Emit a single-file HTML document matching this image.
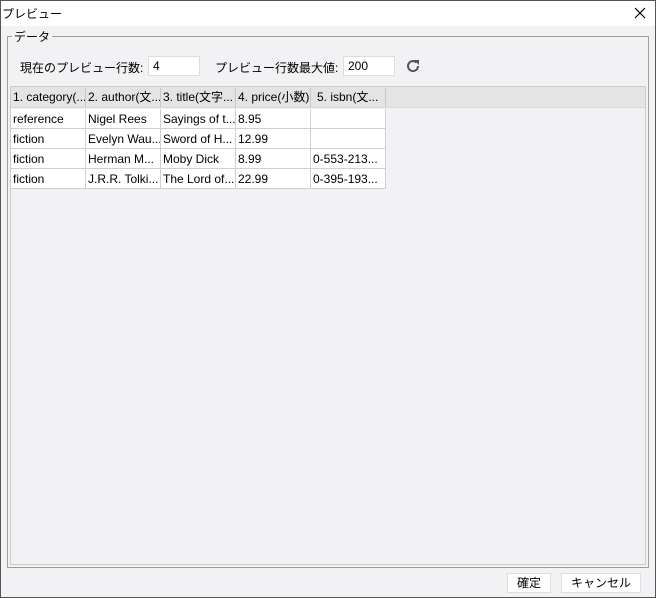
<!DOCTYPE html>
<html><head><meta charset="utf-8"><style>
*{box-sizing:border-box;margin:0;padding:0}
body{width:656px;height:598px;position:relative;background:#f2f2f4;font-family:"Liberation Sans","Noto Sans CJK JP",sans-serif;font-size:12px;color:#000;overflow:hidden}
.abs{position:absolute}
.frame{left:0;top:0;width:656px;height:598px;border:1px solid #555;pointer-events:none}
.title{left:0;top:0;width:656px;height:26px;background:#fff}
.grp{left:7px;top:36px;width:642px;height:532px;border:1px solid #a0a090}
.lg{left:12px;top:28px;background:#f2f2f4;padding:0 2px;font-size:12px}
.inp{background:#fff;border:1px solid #ddd;height:20px;padding:2px 4px;font-size:12px}
.tbl{left:10px;top:86px;width:636px;height:479px;border:1px solid #ccc;background:#f2f2f4}
.hdr{left:0;top:0;width:634px;height:21px;background:#e4e4e4;border-bottom:1px solid #d8d8d8}
.c{position:absolute;height:20px;line-height:20px;padding-left:2px;white-space:nowrap;overflow:hidden;font-size:12px}
.cell{background:#fff;border-right:1px solid #d0d0d0;border-bottom:1px solid #d0d0d0}
.hc{border-right:1px solid #c8c8c8;top:1px;height:19px;line-height:19px}
.btn{background:#fff;border:1px solid #ddd;height:20px;line-height:18px;text-align:center;font-size:12px}
</style></head><body>
<div class="abs title"></div>
<div class="abs" style="left:2px;top:5px;font-size:12px">プレビュー</div>
<svg class="abs" style="left:634px;top:7px" width="12" height="12"><path d="M1 1L11 11M11 1L1 11" stroke="#000" stroke-width="1.2"/></svg>
<div class="abs grp"></div>
<div class="abs lg">データ</div>
<div class="abs" style="left:20px;top:59px">現在のプレビュー行数:</div>
<div class="abs inp" style="left:148px;top:56px;width:52px">4</div>
<div class="abs" style="left:215px;top:59px">プレビュー行数最大値:</div>
<div class="abs inp" style="left:343px;top:56px;width:52px">200</div>
<svg class="abs" style="left:405px;top:58px" width="16" height="16" viewBox="0 0 16 16"><path d="M13 8A5 5 0 1 1 11.5 4.5" fill="none" stroke="#555" stroke-width="2"/><path d="M9 2L14 2L14 7Z" fill="#555"/></svg>
<div class="abs tbl">
<div class="abs hdr"></div>
<div class="c hc" style="left:0;width:75px">1. category(...</div>
<div class="c hc" style="left:75px;width:75px">2. author(文...</div>
<div class="c hc" style="left:150px;width:75px">3. title(文字...</div>
<div class="c hc" style="left:225px;width:75px">4. price(小数)</div>
<div class="c hc" style="left:300px;width:75px;padding-left:6px">5. isbn(文...</div>
<div style="position:absolute;left:0;top:22px">
<div class="c cell" style="left:0;top:0;width:75px">reference</div><div class="c cell" style="left:75px;top:0;width:75px">Nigel Rees</div><div class="c cell" style="left:150px;top:0;width:75px">Sayings of t...</div><div class="c cell" style="left:225px;top:0;width:75px">8.95</div><div class="c cell" style="left:300px;top:0;width:75px"></div>
<div class="c cell" style="left:0;top:20px;width:75px">fiction</div><div class="c cell" style="left:75px;top:20px;width:75px">Evelyn Wau...</div><div class="c cell" style="left:150px;top:20px;width:75px">Sword of H...</div><div class="c cell" style="left:225px;top:20px;width:75px">12.99</div><div class="c cell" style="left:300px;top:20px;width:75px"></div>
<div class="c cell" style="left:0;top:40px;width:75px">fiction</div><div class="c cell" style="left:75px;top:40px;width:75px">Herman M...</div><div class="c cell" style="left:150px;top:40px;width:75px">Moby Dick</div><div class="c cell" style="left:225px;top:40px;width:75px">8.99</div><div class="c cell" style="left:300px;top:40px;width:75px">0-553-213...</div>
<div class="c cell" style="left:0;top:60px;width:75px">fiction</div><div class="c cell" style="left:75px;top:60px;width:75px">J.R.R. Tolki...</div><div class="c cell" style="left:150px;top:60px;width:75px">The Lord of...</div><div class="c cell" style="left:225px;top:60px;width:75px">22.99</div><div class="c cell" style="left:300px;top:60px;width:75px">0-395-193...</div>
</div>
</div>
<div class="abs btn" style="left:507px;top:573px;width:44px">確定</div>
<div class="abs btn" style="left:561px;top:573px;width:80px">キャンセル</div>
<div class="abs frame"></div>
</body></html>
